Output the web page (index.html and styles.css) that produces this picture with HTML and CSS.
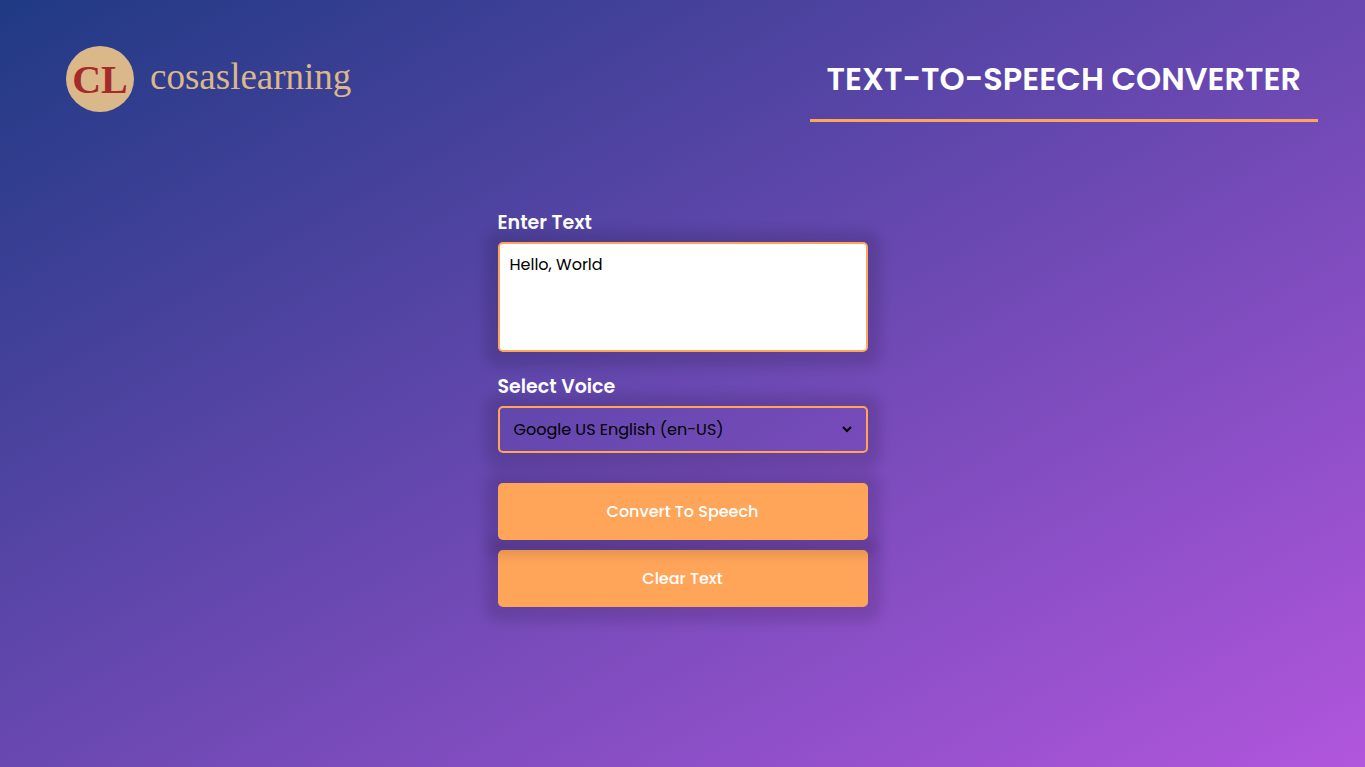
FILE: index.html
```html
<!DOCTYPE html>
<html lang="en">
<head>
  <meta charset="UTF-8">
  <meta name="viewport" content="width=device-width, initial-scale=1.0">
  <title>Text-To-Speech Converter</title>
  <link rel="stylesheet" href="styles.css">
</head>
<body>
  <header class="header">
    <div class="logo">
      <span class="logo-mark">CL</span>
      <span class="logo-name">cosaslearning</span>
    </div>
    <h1 class="title">TEXT-TO-SPEECH CONVERTER</h1>
  </header>

  <main>
    <form class="converter" id="converter">
      <label for="text">Enter Text</label>
      <textarea id="text" class="field text-area" spellcheck="false">Hello, World</textarea>

      <label for="voice">Select Voice</label>
      <select id="voice" class="field voice-select">
        <option>Google US English (en-US)</option>
      </select>

      <button type="submit" class="btn btn-convert">Convert To Speech</button>
      <button type="button" class="btn" id="clear">Clear Text</button>
    </form>
  </main>

  <script>
    const text = document.getElementById('text');

    document.getElementById('converter').addEventListener('submit', function(event) {
      event.preventDefault();
      speechSynthesis.speak(new SpeechSynthesisUtterance(text.value));
    });

    document.getElementById('clear').onclick = function() {
      text.value = '';
    };
  </script>
</body>
</html>
```
FILE: styles.css
```css
* {
  box-sizing: border-box;
  margin: 0;
  padding: 0;
}
body {
  min-height: 100vh;
  font-family: Poppins, Inter, sans-serif;
  color: white;
  background: linear-gradient(to bottom right, #203a84, #b156dd);
}
.header {
  display: flex;
  flex-wrap: wrap;
  justify-content: space-between;
  align-items: flex-start;
  padding: 36px 47px 0 66px;
}
.logo {
  display: flex;
  align-items: center;
  gap: 16px;
  padding-top: 10px;
  font-family: "Liberation Serif", serif;
  color: #dbb88a;
}
.logo-mark {
  display: flex;
  align-items: center;
  justify-content: center;
  width: 68px;
  height: 66px;
  border-radius: 50%;
  background: #dbb88a;
  color: #a52a2a;
  font-size: 40px;
  font-weight: bold;
}
.logo-name {
  padding-bottom: 6px;
  font-size: 37px;
}
.title {
  padding: 19px 17px 16px;
  border-bottom: 3px solid #ffa559;
  font-size: 32px;
  font-weight: 600;
  line-height: 48px;
}
.converter {
  display: flex;
  flex-direction: column;
  max-width: 370px;
  margin: 86px auto 30px;
}
.converter label {
  margin-bottom: 4px;
  font-size: 19px;
  font-weight: 600;
  line-height: 30px;
}
.field,
.btn {
  width: 100%;
  border-radius: 5px;
  font-family: inherit;
  font-size: 16px;
  box-shadow: 0 2px 12px 13px rgba(0, 0, 0, 0.12);
}
.field {
  border: 2px solid #ffa559;
  padding: 10px;
  color: black;
  outline: none;
}
.text-area {
  height: 110px;
  margin-bottom: 20px;
  line-height: 22px;
  background: white;
  resize: none;
}
.voice-select {
  height: 47px;
  margin-bottom: 30px;
  padding: 0 14px;
  appearance: none;
  background: url("data:image/svg+xml,%3Csvg xmlns='http://www.w3.org/2000/svg' width='10' height='7' viewBox='0 0 10 7'%3E%3Cpath d='M1 1l4 4 4-4' fill='none' stroke='black' stroke-width='2'/%3E%3C/svg%3E") no-repeat right 14px center;
}
.btn {
  height: 57px;
  border: none;
  background: #ffa559;
  color: white;
  font-weight: 500;
  cursor: pointer;
}
/* keeps its shadow on top of the next button */
.btn-convert {
  position: relative;
  margin-bottom: 10px;
}
```
